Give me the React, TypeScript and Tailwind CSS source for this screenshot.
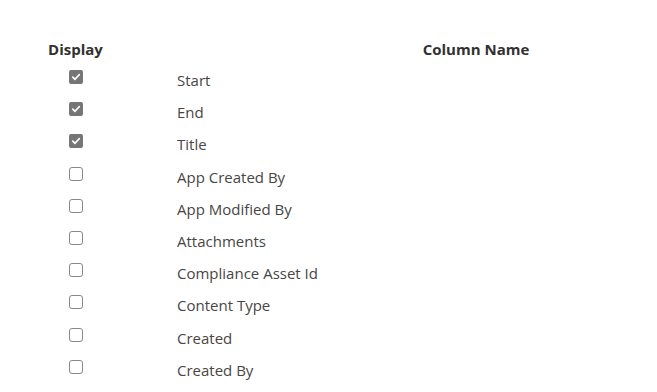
import React from 'react';

const columns: { name: string; checked: boolean }[] = [
  { name: 'Start', checked: true },
  { name: 'End', checked: true },
  { name: 'Title', checked: true },
  { name: 'App Created By', checked: false },
  { name: 'App Modified By', checked: false },
  { name: 'Attachments', checked: false },
  { name: 'Compliance Asset Id', checked: false },
  { name: 'Content Type', checked: false },
  { name: 'Created', checked: false },
  { name: 'Created By', checked: false },
];

const Check: React.FC<{ checked: boolean }> = ({ checked }) =>
  checked ? (
    <span className="flex w-[14px] h-[14px] items-center justify-center rounded-[2px] bg-[#767676]">
      <svg width="10" height="10" viewBox="0 0 10 10" fill="none">
        <path d="M1.8 5.2 L4 7.3 L8.3 2.6" stroke="white" strokeWidth="1.7" strokeLinecap="round" strokeLinejoin="round" />
      </svg>
    </span>
  ) : (
    <span className="block w-[14px] h-[14px] rounded-[3px] border border-[#8a8886] bg-white" />
  );

export default function App() {
  return (
    <div className="w-[657px] h-[392px] bg-white overflow-hidden text-[#484644]" style={{ fontFamily: '"Open Sans", "Noto Sans", sans-serif' }}>
      <div className="pt-[38px]">
        {/* header */}
        <div className="flex h-[22px] items-center">
          <div className="w-[151px] shrink-0 flex justify-center text-[15px] font-bold text-[#323130]">Display</div>
          <div className="w-[650px] shrink-0 flex justify-center text-[15px] font-bold text-[#323130]">Column Name</div>
        </div>
        <div className="mt-[4px]">
          {columns.map((c) => (
            <div key={c.name} className="flex h-[32.2px]">
              <div className="w-[151px] shrink-0 flex justify-center pt-[6px]">
                <Check checked={c.checked} />
              </div>
              <div className="pl-[26px] pt-[6px] text-[15px] leading-[20px]">{c.name}</div>
            </div>
          ))}
        </div>
      </div>
    </div>
  );
}
